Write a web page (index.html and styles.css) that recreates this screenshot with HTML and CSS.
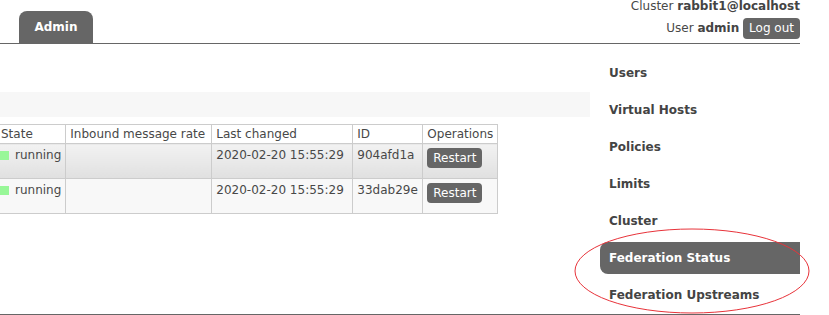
FILE: index.html
```html
<!DOCTYPE html>
<html>

<head>
  <meta charset="UTF-8">
  <title>RabbitMQ Management - Federation Status</title>
  <link rel="stylesheet" href="styles.css">
</head>

<body>
  <div class="page">
    <!-- Cabeçalho com abas e login -->
    <div class="header">
      <ul class="tabs">
        <li class="tab active">Admin</li>
      </ul>
      <div class="login">
        <div class="login-row">Cluster <b>rabbit1@localhost</b></div>
        <div class="login-row">User <b>admin</b> <button class="logout">Log out</button></div>
      </div>
    </div>

    <div class="main">
      <div class="content">
        <div class="band"></div>
        <table class="list">
          <thead>
            <tr>
              <th class="c-state">State</th>
              <th class="c-rate">Inbound message rate</th>
              <th class="c-changed">Last changed</th>
              <th class="c-id">ID</th>
              <th class="c-ops">Operations</th>
            </tr>
          </thead>
          <tbody>
            <tr class="alt1">
              <td class="c-state"><span class="dot"></span>running</td>
              <td></td>
              <td>2020-02-20 15:55:29</td>
              <td>904afd1a</td>
              <td><button class="small-btn">Restart</button></td>
            </tr>
            <tr class="alt2">
              <td class="c-state"><span class="dot"></span>running</td>
              <td></td>
              <td>2020-02-20 15:55:29</td>
              <td>33dab29e</td>
              <td><button class="small-btn">Restart</button></td>
            </tr>
          </tbody>
        </table>
      </div>

      <!-- Menu lateral do admin -->
      <ul class="nav">
        <li><a>Users</a></li>
        <li><a>Virtual Hosts</a></li>
        <li><a>Policies</a></li>
        <li><a>Limits</a></li>
        <li><a>Cluster</a></li>
        <li><a class="selected">Federation Status</a></li>
        <li><a>Federation Upstreams</a></li>
      </ul>
    </div>

    <div class="footer"></div>
  </div>

  <svg class="mark" width="829" height="315" viewBox="0 0 829 315">
    <ellipse cx="692" cy="271" rx="117" ry="42" fill="none" stroke="#e8333a" stroke-width="1"></ellipse>
  </svg>
</body>

</html>
```

FILE: styles.css
```css
body {
  font-family: 'DejaVu Sans', Verdana, sans-serif;
  font-size: 12px;
  margin: 0;
  padding: 0;
  background-color: white;
  color: #484848;
}

.page {
  width: 800px;
}

.header {
  display: flex;
  justify-content: space-between;
  height: 43px;
  border-bottom: 1px solid #666;
}

.tabs {
  list-style: none;
  margin: 0;
  padding: 11px 0 0 19px;
  display: flex;
}

.tab {
  width: 74px;
  height: 32px;
  line-height: 33px;
  text-align: center;
  font-weight: bold;
  color: white;
  background-color: #666;
  border-radius: 8px 8px 0 0;
}

.login {
  display: flex;
  flex-direction: column;
  align-items: flex-end;
}

.login-row {
  height: 18px;
  line-height: 12px;
}

.login-row b {
  color: #444;
}

.logout {
  font-family: inherit;
  font-size: 12px;
  color: white;
  background-color: #666;
  border: none;
  border-radius: 4px;
  padding: 3px 6px 4px;
  margin: 0;
}

.main {
  display: flex;
}

.content {
  width: 590px;
  padding-top: 48px;
}

.band {
  height: 25px;
  background-color: #f7f7f7;
  margin-bottom: 7px;
}

/* Tabela de links federados */
.list {
  border-collapse: collapse;
}

.list th,
.list td {
  border: 1px solid #ccc;
  padding: 2px 4px;
  text-align: left;
  vertical-align: top;
  font-weight: normal;
  white-space: nowrap;
}

.list th {
  height: 14px;
  background-color: white;
}

.list td {
  height: 28px;
  padding-top: 4px;
}

.list .c-state {
  border-left: none;
  padding-left: 1px;
  width: 59px;
}

.c-rate {
  width: 137px;
}

.c-changed {
  width: 132px;
}

.c-id {
  width: 61px;
}

.c-ops {
  width: 66px;
}

.alt1 td {
  background: linear-gradient(#f2f2f2, #e0e0e0);
}

.alt2 td {
  background-color: #f8f8f8;
}

.dot {
  display: inline-block;
  width: 9px;
  height: 9px;
  background-color: #98f798;
  margin-right: 6px;
  vertical-align: -1px;
  margin-left: -1px;
}

.small-btn {
  font-family: inherit;
  font-size: 12px;
  color: white;
  background-color: #666;
  border: none;
  border-radius: 4px;
  padding: 3px 6px 3px;
  margin: 0;
}

.nav {
  list-style: none;
  margin: 0 0 0 10px;
  padding: 13px 0 0 0;
  width: 200px;
}

.nav li {
  margin-bottom: 5px;
}

.nav a {
  display: block;
  padding: 9px 9px;
  line-height: 14px;
  font-weight: bold;
  color: #444;
  border-radius: 8px 0 0 8px;
}

.nav a.selected {
  background-color: #666;
  color: white;
}

.footer {
  border-top: 1px solid #666;
  margin-top: -2px;
}

.mark {
  position: absolute;
  top: 0;
  left: 0;
  pointer-events: none;
}
```
